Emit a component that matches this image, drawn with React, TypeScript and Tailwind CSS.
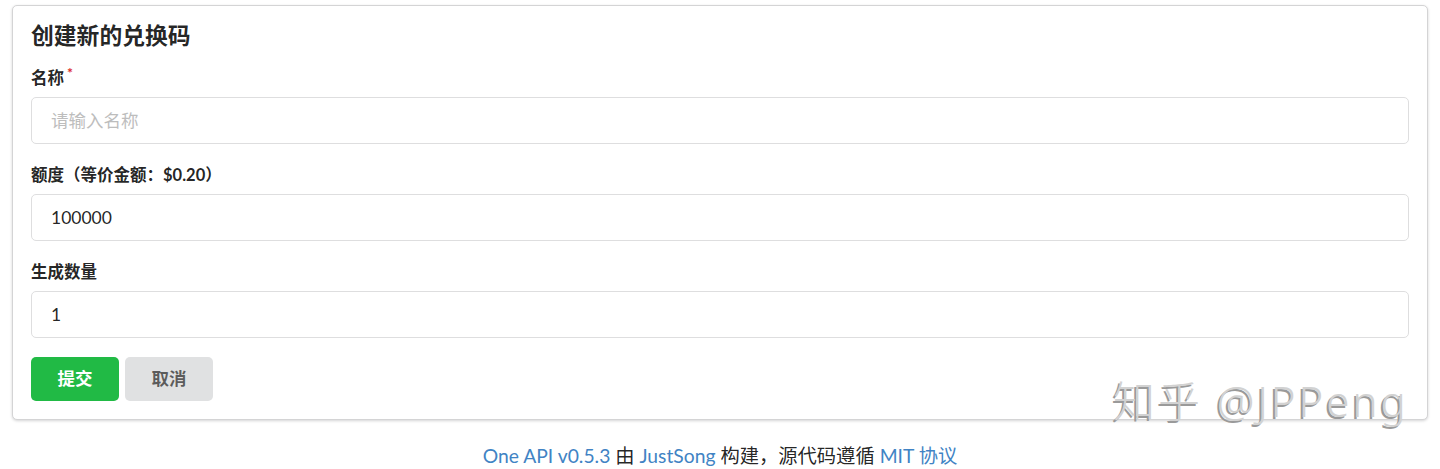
import React from 'react';

const font = { fontFamily: 'Lato, "Noto Sans CJK SC", sans-serif' };

const Field: React.FC<{ label: React.ReactNode; value?: string; placeholder?: string }> = ({ label, value, placeholder }) => (
  <div className="flex flex-col">
    <label className="text-[16.5px] leading-[20px] font-bold text-[rgba(0,0,0,0.87)] mb-[9px]">{label}</label>
    <input
      readOnly
      value={value ?? ''}
      placeholder={placeholder}
      className="h-[47px] w-full rounded-[5px] border border-[#dededf] bg-white px-[19px] text-[17.5px] text-[rgba(0,0,0,0.87)] placeholder:text-[#bdbdbd] outline-none"
    />
  </div>
);

export default function App() {
  return (
    <div className="relative min-h-[469px] bg-white" style={font}>
      <div className="pt-[5px] px-[12px]">
        <div className="rounded-[5px] border border-[#d4d4d5] bg-white shadow-[0_1px_3px_0_#d4d4d5] px-[18px] pt-[15px] pb-[18px]">
          <h2 className="text-[22.8px] leading-[29px] font-bold text-[rgba(0,0,0,0.87)] mb-[18px]">创建新的兑换码</h2>
          <div className="flex flex-col gap-[21px]">
            <Field
              label={
                <>
                  名称<span className="text-[#db2828] align-top text-[14px] ml-[3px] relative -top-[5px]">*</span>
                </>
              }
              placeholder="请输入名称"
            />
            <Field label="额度（等价金额：$0.20）" value="100000" />
            <Field label="生成数量" value="1" />
          </div>
          <div className="flex gap-[6px] mt-[19px]">
            <button className="h-[44px] w-[88px] rounded-[5px] bg-[#21ba45] text-white text-[17.5px] font-bold">提交</button>
            <button className="h-[44px] w-[88px] rounded-[5px] bg-[#e0e1e2] text-[rgba(0,0,0,0.6)] text-[17.5px] font-bold">取消</button>
          </div>
        </div>
      </div>
      <div className="text-center text-[19.3px] leading-[26px] mt-[23px] text-[rgba(0,0,0,0.87)]">
        <a className="text-[#4183c4]">One API v0.5.3</a> 由 <a className="text-[#4183c4]">JustSong</a> 构建，源代码遵循{' '}
        <a className="text-[#4183c4]">MIT 协议</a>
      </div>
      <div
        className="absolute left-[1113px] top-[374px] text-[42px] leading-[54px] text-[#d2d2d2] font-light tracking-[3px]"
        style={{ textShadow: '-2px 2px 0 #9a9a9a', fontFamily: '"Noto Sans", "Noto Sans CJK SC", sans-serif' }}
      >
        知乎 @JPPeng
      </div>
    </div>
  );
}
